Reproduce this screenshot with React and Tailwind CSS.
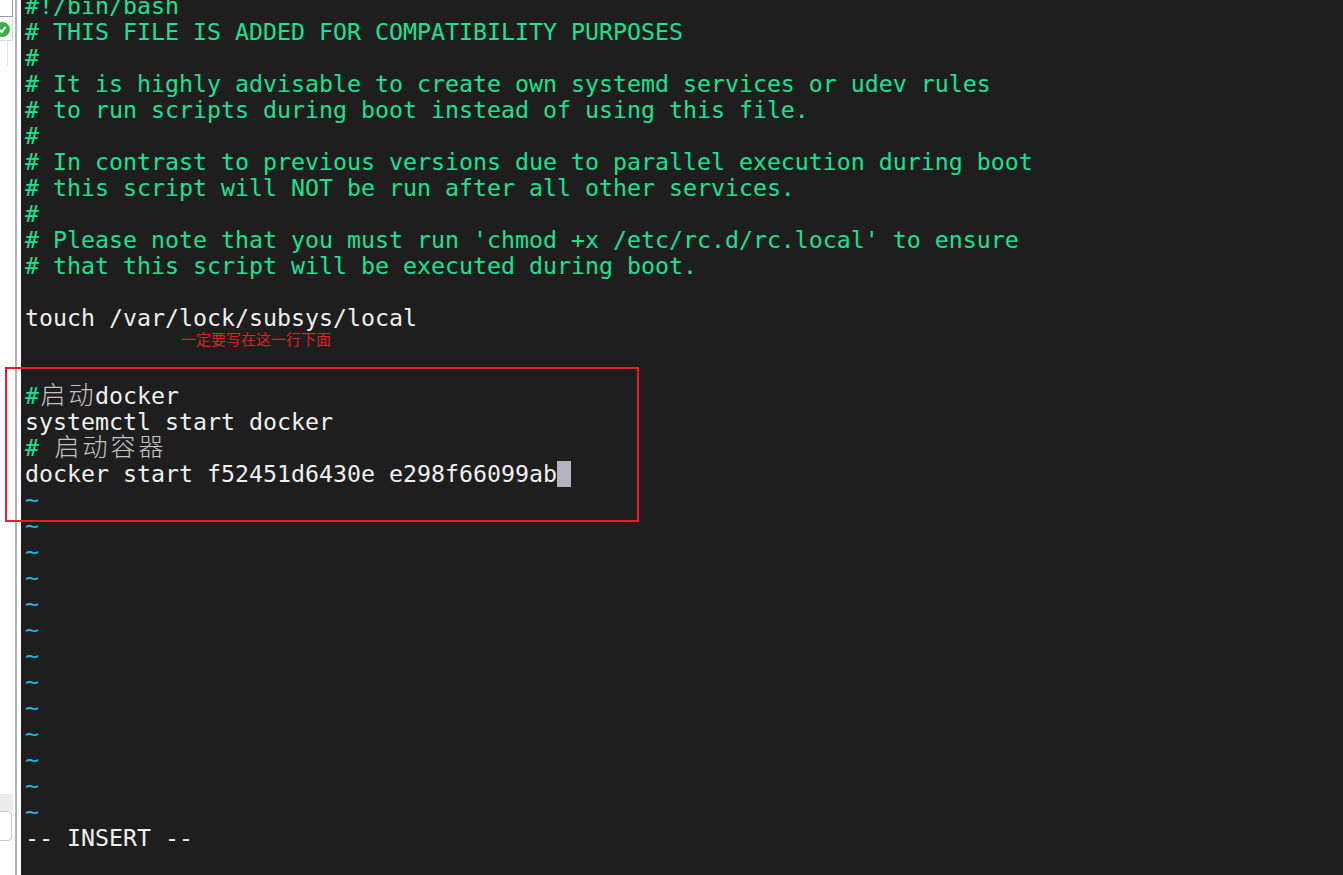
const commentLines = [
  "#!/bin/bash",
  "# THIS FILE IS ADDED FOR COMPATIBILITY PURPOSES",
  "#",
  "# It is highly advisable to create own systemd services or udev rules",
  "# to run scripts during boot instead of using this file.",
  "#",
  "# In contrast to previous versions due to parallel execution during boot",
  "# this script will NOT be run after all other services.",
  "#",
  "# Please note that you must run 'chmod +x /etc/rc.d/rc.local' to ensure",
  "# that this script will be executed during boot.",
];

function Row({ children, className = "" }) {
  return <div className={"h-[26px] leading-[26px] whitespace-pre " + className}>{children}</div>;
}

// each CJK char sits on two terminal cells
function Wide({ children }) {
  return (
    <span className="inline-block h-[26px] align-top pl-[1.5px] -mr-[1.5px] text-[25px] tracking-[3px] text-[#c4c4c4] font-light">
      {children}
    </span>
  );
}

function Sidebar() {
  return (
    <div className="w-[21px] h-full shrink-0 bg-white">
      <div className="w-[17px] h-full flex flex-col border-r-2 border-[#b4b4b4] pb-[34px]">
        <div className="w-[13px] h-[17px] shrink-0 border-r border-b border-[#9a9a9a]" />
        <div className="w-[13px] h-[22px] shrink-0 mt-[2px] flex items-center border-r border-b border-[#d8d8d8]">
          <div className="w-[15px] h-[15px] shrink-0 -ml-[5px] rounded-full bg-[#3fae4a] flex items-center justify-center">
            <svg width="11" height="11" viewBox="0 0 11 11" fill="none" stroke="#fff" strokeWidth="2">
              <path d="M2.5 6 L4.6 8 L8.5 3" />
            </svg>
          </div>
        </div>
        <div className="w-px h-[25px] ml-[7px] bg-[#e2e2e2]" />
        <div className="mt-auto w-[13px] h-[17px] bg-[#ececec]" />
        <div className="w-[16px] h-[30px] -ml-[4px] rounded border border-[#c8c8c8] bg-white" />
      </div>
    </div>
  );
}

export default function App() {
  return (
    <div className="flex h-[875px] w-[1343px] overflow-hidden bg-[#1e1e1e] font-['DejaVu_Sans_Mono','Noto_Sans_CJK_SC',monospace] text-[23.26px] text-[#f0f0f0]">
      <Sidebar />
      <div className="relative flex-1 pl-[4px]">
        <div className="-mt-[7px]">
          {commentLines.map((l, i) => (
            <Row key={i} className="text-[#1ce28f]">{l}</Row>
          ))}
          <Row> </Row>
          <Row>touch /var/lock/subsys/local</Row>
          <Row> </Row>
          <Row> </Row>
          <Row><span className="text-[#1ce28f]">#</span><Wide>启动</Wide>docker</Row>
          <Row>systemctl start docker</Row>
          <Row><span className="text-[#1ce28f]"># </span><Wide>启动容器</Wide></Row>
          <Row>docker start f52451d6430e e298f66099ab<span className="inline-block w-[14px] h-[26px] align-top bg-[#b5b3c0]" /></Row>
          {Array.from({ length: 13 }).map((_, i) => (
            <Row key={i} className="text-[#1cb4e2]">~</Row>
          ))}
          <Row>-- INSERT --</Row>
        </div>
        {/* annotations pasted on top of the terminal */}
        <div className="absolute left-[160px] top-[331px] text-[15px] leading-[16px] text-[#e0201f] font-['Noto_Sans_CJK_SC',sans-serif] whitespace-nowrap">一定要写在这一行下面</div>
        <div className="absolute left-[-16px] top-[367px] w-[634px] h-[155px] border-2 border-[#ed1c24]" />
      </div>
    </div>
  );
}
